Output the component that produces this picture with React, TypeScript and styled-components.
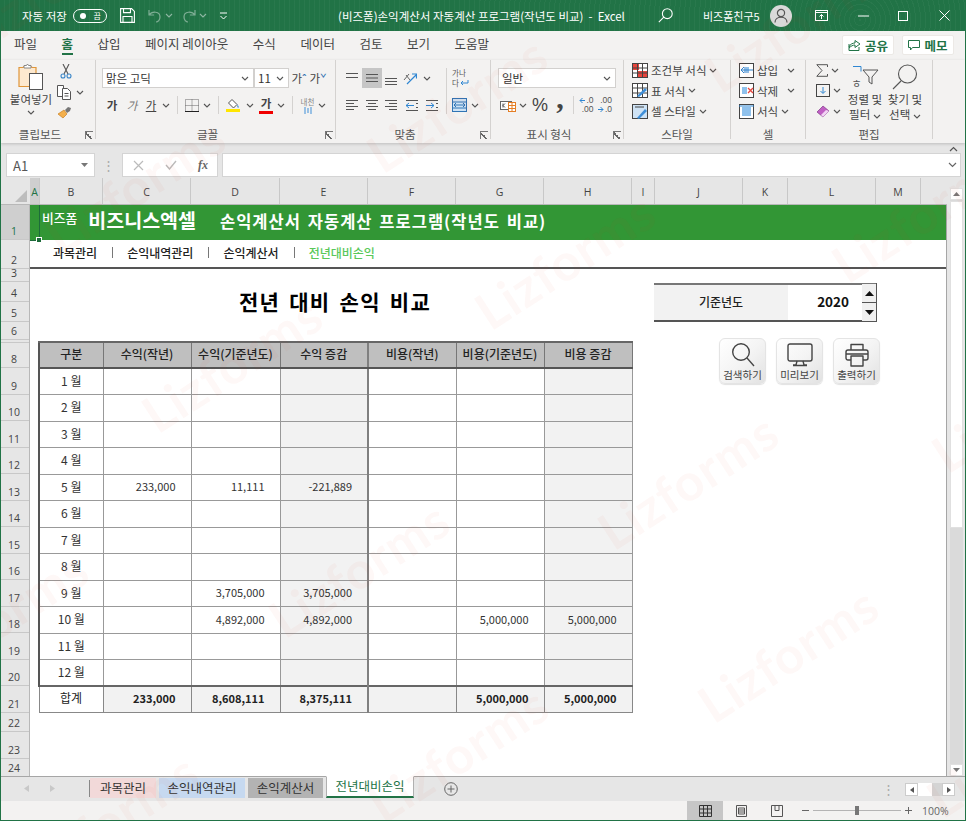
import React from "react";
import styled, { createGlobalStyle } from "styled-components";

const GlobalStyle = createGlobalStyle`
  html, body { margin: 0; padding: 0; background: #fff; }
  * { box-sizing: border-box; }
  body { font-family: "Noto Sans CJK KR", "Noto Sans", sans-serif; }
`;

const KR = `"Noto Sans CJK KR", "Noto Sans", sans-serif`;

const colWidths: [string, number][] = [
  ["A", 10], ["B", 63], ["C", 88], ["D", 89], ["E", 88], ["F", 88], ["G", 88],
  ["H", 88], ["I", 23], ["J", 88], ["K", 45], ["L", 88], ["M", 45],
];

const rowHeights: [string, number][] = [
  ["1", 35], ["2", 29], ["3", 13], ["4", 20], ["5", 20], ["6", 18], ["", 3], ["8", 25],
  ["9", 27], ["10", 26], ["11", 27], ["12", 26], ["13", 27], ["14", 26], ["15", 27], ["16", 26],
  ["17", 27], ["18", 26], ["19", 27], ["20", 26], ["21", 27], ["22", 19], ["23", 27], ["24", 18],
];

const rows: string[][] = [
  ["1 월", "", "", "", "", "", ""],
  ["2 월", "", "", "", "", "", ""],
  ["3 월", "", "", "", "", "", ""],
  ["4 월", "", "", "", "", "", ""],
  ["5 월", "233,000", "11,111", "-221,889", "", "", ""],
  ["6 월", "", "", "", "", "", ""],
  ["7 월", "", "", "", "", "", ""],
  ["8 월", "", "", "", "", "", ""],
  ["9 월", "", "3,705,000", "3,705,000", "", "", ""],
  ["10 월", "", "4,892,000", "4,892,000", "", "5,000,000", "5,000,000"],
  ["11 월", "", "", "", "", "", ""],
  ["12 월", "", "", "", "", "", ""],
];

const totals = ["합계", "233,000", "8,608,111", "8,375,111", "", "5,000,000", "5,000,000"];
const headers = ["구분", "수익(작년)", "수익(기준년도)", "수익 증감", "비용(작년)", "비용(기준년도)", "비용 증감"];
const tableCols = [64, 88, 89, 88, 88, 88, 88];

// where each faint watermark starts (baseline, left end)
const marks = [
  [-20, 60], [63, 262], [385, 180], [723, 100], [160, 440], [493, 337], [850, 290],
  [616, 557], [950, 480], [-74, 694], [287, 645], [716, 730], [386, 830], [36, 897], [945, 825],
];

const Chev = ({ dim }: { dim?: boolean }) => (
  <svg width="8" height="5" viewBox="0 0 8 5">
    <path d="M1 1l3 3 3-3" fill="none" stroke={dim ? "#8fb7a3" : "#555"} strokeWidth="1.1" />
  </svg>
);

const Lines = ({ d }: { d: string }) => (
  <svg width="14" height="14" viewBox="0 0 14 14"><path d={d} fill="none" stroke="#555" /></svg>
);

const IndentIcon = ({ flip }: { flip: boolean }) => (
  <svg width="14" height="13" viewBox="0 0 14 13" fill="none">
    <path d="M1 1.5h12M1 11.5h12" stroke="#555" />
    <path d={flip ? "M1 6.5h8M6 4l3 2.500L6 9" : "M9 6.5H1M4 4L1 6.500 4 9"} stroke="#2f86d2" />
    <path d="M11 4.5h2M11 8.500h2" stroke="#555" />
  </svg>
);

const App = () => (
  <Window>
    <GlobalStyle />
    <TitleBar>
      <QuickAccess>
        <TitleText>자동 저장</TitleText>
        <Toggle><ToggleDot /><ToggleText>끔</ToggleText></Toggle>
        <svg width="15" height="15" viewBox="0 0 15 15" fill="none" stroke="#fff" strokeWidth="1.1">
          <path d="M.6.6h11l2.800 2.800v11H.6z" /><path d="M3.500.6v4h7v-4M3 14.400V8.500h9v5.900" />
        </svg>
        <QatGroup>
          <svg width="14" height="14" viewBox="0 0 14 14" fill="none" stroke="#7fae95" strokeWidth="1.2">
            <path d="M1 1v5h5M1 6c3-4 11-4 11 2 0 3-2 5-4 5" />
          </svg>
          <Chev dim />
        </QatGroup>
        <QatGroup>
          <svg width="14" height="14" viewBox="0 0 14 14" fill="none" stroke="#7fae95" strokeWidth="1.2">
            <path d="M13 1v5H8M13 6C10 2 2 2 2 8c0 3 2 5 4 5" />
          </svg>
          <Chev dim />
        </QatGroup>
        <svg width="7" height="8" viewBox="0 0 7 8"><path d="M0 1h7M.5 4l3 3 3-3" fill="none" stroke="#fff" /></svg>
      </QuickAccess>
      <WindowTitle>(비즈폼)손익계산서 자동계산 프로그램(작년도 비교)&nbsp;&nbsp;-&nbsp;&nbsp;Excel</WindowTitle>
      <TitleActions>
        <svg width="15" height="15" viewBox="0 0 15 15" fill="none" stroke="#fff" strokeWidth="1.1">
          <circle cx="9.3" cy="5.7" r="4.900" /><path d="M5.800 9.200L.8 14.200" />
        </svg>
        <UserName>비즈폼친구5</UserName>
        <Avatar>
          <svg width="14" height="15" viewBox="0 0 14 15" fill="none" stroke="#555" strokeWidth="1.2">
            <circle cx="7" cy="5" r="3.600" /><path d="M1 14.500c0-7 12-7 12 0" />
          </svg>
        </Avatar>
        <WindowButton $w={36}>
          <svg width="13" height="11" viewBox="0 0 13 11" fill="none" stroke="#fff">
            <rect x=".5" y=".5" width="12" height="10" /><path d="M.5 2.500h12M6.500 9V4.500M4.500 6.500l2-2 2 2" />
          </svg>
        </WindowButton>
        <WindowButton $w={41}>
          <svg width="11" height="2" viewBox="0 0 11 2"><path d="M0 1h11" stroke="#fff" /></svg>
        </WindowButton>
        <WindowButton $w={39}>
          <svg width="10" height="10" viewBox="0 0 10 10"><rect x=".5" y=".5" width="9" height="9" fill="none" stroke="#fff" /></svg>
        </WindowButton>
        <WindowButton $w={42}>
          <svg width="11" height="11" viewBox="0 0 11 11"><path d="M.5.500l10 10M10.500.500l-10 10" stroke="#fff" /></svg>
        </WindowButton>
      </TitleActions>
    </TitleBar>

    <MenuBar>
      <MenuTab>파일</MenuTab>
      <MenuTab $active>홈</MenuTab>
      <MenuTab>삽입</MenuTab>
      <MenuTab>페이지 레이아웃</MenuTab>
      <MenuTab>수식</MenuTab>
      <MenuTab>데이터</MenuTab>
      <MenuTab>검토</MenuTab>
      <MenuTab>보기</MenuTab>
      <MenuTab>도움말</MenuTab>
      <MenuActions>
        <PillButton>
          <svg width="13" height="12" viewBox="0 0 13 12" fill="none" stroke="#217346">
            <path d="M1 5v6.500h10V8M1 8c1-3 4-4 6-4V1.500l5 3.500-5 3.500V6C5 6 3 7 1 9" />
          </svg>
          공유
        </PillButton>
        <PillButton>
          <svg width="12" height="11" viewBox="0 0 12 11" fill="none" stroke="#217346">
            <path d="M.5.500h11v7h-7l-2 2.500v-2.500h-2z" />
          </svg>
          메모
        </PillButton>
      </MenuActions>
    </MenuBar>

    <Ribbon>
      <Group $w={95}>
        <ClipBody>
          <PasteColumn>
            <svg width="26" height="27" viewBox="0 0 26 27">
              <path d="M1 4.500h4l1-1h7l1 1h4v19H1z" fill="#fde9cf" stroke="#e0963a" strokeWidth="1.2" />
              <path d="M6 5V2.500h2.500l1-1.500 1 1.500H13V5z" fill="#fff" stroke="#888" />
              <rect x="11.500" y="10.500" width="13" height="16" fill="#fff" stroke="#555" />
            </svg>
            <SmallLabel>붙여넣기</SmallLabel>
            <Chev />
          </PasteColumn>
          <ClipTools>
            <CutIcon>
              <svg width="12" height="15" viewBox="0 0 12 15" fill="none" strokeWidth="1.1">
                <path d="M3 0l5 10M9 0L4 10" stroke="#555" />
                <circle cx="3" cy="12" r="2" stroke="#3a86c8" /><circle cx="9" cy="12" r="2" stroke="#3a86c8" />
              </svg>
            </CutIcon>
            <ToolRow>
              <svg width="15" height="15" viewBox="0 0 15 15" fill="#fff" stroke="#555">
                <path d="M.5.500h6v11h-6z" /><path d="M5.500 3.500h5l3 3v8h-8z" /><path d="M7.500 8.500h4M7.500 11h4" />
              </svg>
              <Slot $w={15}><Chev /></Slot>
            </ToolRow>
            <svg width="16" height="14" viewBox="0 0 16 14">
              <path d="M8 5l3-3 3 1-1 3-3 2z" fill="#777" />
              <path d="M1 9l6-4 3 4-4 4z" fill="#f4b04c" stroke="#c97f22" strokeWidth=".7" />
            </svg>
          </ClipTools>
        </ClipBody>
        <GroupLabel $launch>클립보드<Launcher /></GroupLabel>
      </Group>

      <Group $w={240}>
        <GroupBody $pad={6}>
          <ToolRow>
            <SelectBox $w={152}><span>맑은 고딕</span><Chev /></SelectBox>
            <SelectBox $w={35}><span>11</span><Chev /></SelectBox>
            <Slot $w={20}><GlyphText>가<Tiny>ˆ</Tiny></GlyphText></Slot>
            <Slot $w={18}><GlyphText>가<Tiny>ˇ</Tiny></GlyphText></Slot>
          </ToolRow>
          <ToolRow>
            <Slot $w={20}><GlyphText $bold>가</GlyphText></Slot>
            <Slot $w={20}><GlyphText $italic>가</GlyphText></Slot>
            <Slot $w={18}><GlyphText $under>가</GlyphText></Slot>
            <Slot $w={12}><Chev /></Slot>
            <RowSep />
            <Slot $w={17}>
              <svg width="14" height="13" viewBox="0 0 14 13" fill="none" stroke="#666" strokeDasharray="1 1">
                <path d="M.5.500h13v12h-13zM7 .500v12M.5 6.500h13" /><path d="M0 12.500h14" stroke="#222" strokeDasharray="none" />
              </svg>
            </Slot>
            <Slot $w={13}><Chev /></Slot>
            <RowSep />
            <Slot $w={18}>
              <ColorGlyph>
                <svg width="13" height="10" viewBox="0 0 13 10">
                  <path d="M5 .500l5 5-3.500 3.500-5-5z" fill="#fff" stroke="#555" /><path d="M10.500 5.500c1 1.500 1.500 2.500 1 3.200-.8.500-1.500-.5-1-3.200z" fill="#2f86d2" />
                </svg>
                <ColorBar $c="#ffe600" />
              </ColorGlyph>
            </Slot>
            <Slot $w={15}><Chev /></Slot>
            <Slot $w={18}>
              <ColorGlyph><GlyphText $bold>가</GlyphText><ColorBar $c="#f00000" /></ColorGlyph>
            </Slot>
            <Slot $w={12}><Chev /></Slot>
            <RowSep />
            <Slot $w={19}>
              <PhoneticIcon>
                내천
                <svg width="8" height="7" viewBox="0 0 8 7"><path d="M1 0v7M4 1v5M7 0v7" stroke="#3f8fd8" /></svg>
              </PhoneticIcon>
            </Slot>
            <Slot $w={10}><Chev /></Slot>
          </ToolRow>
        </GroupBody>
        <GroupLabel $launch>글꼴<Launcher /></GroupLabel>
      </Group>

      <Group $w={155}>
        <AlignBody>
          <AlignColumn>
            <ToolRow>
              <Slot $w={20}><Lines d="M1 2.500h12M1 6.500h12" /></Slot>
              <Slot $w={20} $selected><Lines d="M1 3.500h12M1 7h12M1 10.500h12" /></Slot>
              <Slot $w={18}><Lines d="M1 7.500h12M1 10.500h12M1 13.500h12" /></Slot>
              <Slot $w={20}>
                <svg width="14" height="14" viewBox="0 0 14 14" fill="none">
                  <path d="M1 9l5-6M3 4l4 5" stroke="#666" /><path d="M4 13L13 4M9 3h4.500v4.500" stroke="#2f86d2" strokeWidth="1.2" />
                </svg>
              </Slot>
              <Slot $w={14}><Chev /></Slot>
            </ToolRow>
            <ToolRow>
              <Slot $w={20}><Lines d="M1 2.500h12M1 5.500h8M1 8.500h12M1 11.500h8" /></Slot>
              <Slot $w={20}><Lines d="M1 2.500h12M3 5.500h8M1 8.500h12M3 11.500h8" /></Slot>
              <Slot $w={18}><Lines d="M1 2.500h12M5 5.500h8M1 8.500h12M5 11.500h8" /></Slot>
              <Slot $w={23}><IndentIcon flip={false} /></Slot>
              <Slot $w={18}><IndentIcon flip /></Slot>
            </ToolRow>
          </AlignColumn>
          <RowSep $tall />
          <WrapColumn>
            <WrapIcon>
              <span>가나</span>
              <WrapLine>
                <span>다</span>
                <svg width="9" height="7" viewBox="0 0 9 7" fill="none" stroke="#2f86d2"><path d="M8 0v3H1M3 1L1 3l2 2" /></svg>
              </WrapLine>
            </WrapIcon>
            <ToolRow>
              <svg width="15" height="14" viewBox="0 0 15 14" fill="#cfe3f5" stroke="#2f74b5">
                <rect x=".5" y=".5" width="14" height="13" /><path d="M.5 4h14M.5 10h14" /><path d="M2 7h11M4 5l-2 2 2 2M11 5l2 2-2 2" fill="none" />
              </svg>
              <Slot $w={16}><Chev /></Slot>
            </ToolRow>
          </WrapColumn>
        </AlignBody>
        <GroupLabel $launch>맞춤<Launcher /></GroupLabel>
      </Group>

      <Group $w={133}>
        <GroupBody $pad={7}>
          <ToolRow><SelectBox $w={118}><span>일반</span><Chev /></SelectBox></ToolRow>
          <ToolRow>
            <Slot $w={20}>
              <svg width="16" height="13" viewBox="0 0 16 13" fill="none">
                <rect x=".5" y="2.500" width="11" height="8" stroke="#666" fill="#fff" />
                <path d="M3 4.500v4M5 4.500l-2 2 2 2" stroke="#555" />
                <rect x="8.500" y="3.500" width="7" height="9" fill="#fff" stroke="#e57e25" /><path d="M8.500 6.500h7M8.500 9.500h7M12 3.500v9" stroke="#e57e25" />
              </svg>
            </Slot>
            <Slot $w={10}><Chev /></Slot>
            <Slot $w={24}><PercentText>%</PercentText></Slot>
            <Slot $w={16}><CommaText>,</CommaText></Slot>
            <RowSep />
            <Slot $w={15}>
              <DecimalIcon>
                <DecimalLine>
                  <svg width="6" height="7" viewBox="0 0 6 7" fill="none" stroke="#2f86d2"><path d="M6 3.500H1M3.500 1L1 3.500 3.500 6" /></svg>
                  <span>.0</span>
                </DecimalLine>
                <DecimalLine>.00</DecimalLine>
              </DecimalIcon>
            </Slot>
            <Slot $w={22}>
              <DecimalIcon>
                <DecimalLine>.00</DecimalLine>
                <DecimalLine>
                  <svg width="6" height="7" viewBox="0 0 6 7" fill="none" stroke="#2f86d2"><path d="M0 3.500h5M2.500 1L5 3.500 2.500 6" /></svg>
                  <span>.0</span>
                </DecimalLine>
              </DecimalIcon>
            </Slot>
          </ToolRow>
        </GroupBody>
        <GroupLabel $launch>표시 형식<Launcher /></GroupLabel>
      </Group>

      <Group $w={107}>
        <ListBody>
          <ListRow>
            <svg width="16" height="15" viewBox="0 0 16 15" stroke="#444"><rect x=".5" y=".5" width="15" height="14" fill="#fff" /><rect x="1" y="1" width="6" height="6" fill="#e8453c" stroke="none" /><rect x="6" y="8" width="9" height="6" fill="#e8453c" stroke="none" /><path d="M.5 5h15M.5 10h15M5.500.5v14M10.500.5v14" fill="none" /></svg>
            조건부 서식 <Chev />
          </ListRow>
          <ListRow>
            <svg width="16" height="15" viewBox="0 0 16 15"><rect x=".5" y=".5" width="15" height="14" fill="#fff" stroke="#444" /><path d="M.5 5h15M.5 10h15M5.500.5v14M10.500.5v14" stroke="#444" /><path d="M5 13l8-8 2 2-8 7z" fill="#3f8fd8" /></svg>
            표 서식 <Chev />
          </ListRow>
          <ListRow>
            <svg width="16" height="15" viewBox="0 0 16 15"><rect x=".5" y=".5" width="15" height="14" fill="#cfe3f5" stroke="#444" /><path d="M5 14l8-9 2 2-8 8z" fill="#3f8fd8" /><path d="M3 3h9" stroke="#444" /></svg>
            셀 스타일 <Chev />
          </ListRow>
        </ListBody>
        <GroupLabel>스타일</GroupLabel>
      </Group>

      <Group $w={75}>
        <ListBody>
          <ListRow>
            <svg width="15" height="15" viewBox="0 0 15 15"><rect x=".5" y=".5" width="14" height="14" fill="#fff" stroke="#444" /><rect x="5" y="4" width="5" height="6" fill="#8fc1ec" /><path d="M14 7H2M5 4L2 7l3 3" fill="none" stroke="#2f86d2" /></svg>
            삽입 <CellChev><Chev /></CellChev>
          </ListRow>
          <ListRow>
            <svg width="15" height="15" viewBox="0 0 15 15"><rect x=".5" y=".5" width="14" height="14" fill="#fff" stroke="#444" /><rect x="3" y="4" width="5" height="7" fill="#8fc1ec" /><path d="M9 5l5 5M14 5l-5 5" stroke="#e8453c" strokeWidth="1.3" /></svg>
            삭제 <CellChev><Chev /></CellChev>
          </ListRow>
          <ListRow>
            <svg width="15" height="15" viewBox="0 0 15 15"><rect x=".5" y=".5" width="14" height="14" fill="#fff" stroke="#444" /><rect x="3" y="3" width="9" height="9" fill="#8fc1ec" /><path d="M0 2h15" stroke="#2f86d2" /></svg>
            서식 <Chev />
          </ListRow>
        </ListBody>
        <GroupLabel>셀</GroupLabel>
      </Group>

      <Group $w={127}>
        <EditBody>
          <EditColumn>
            <ToolRow>
              <svg width="12" height="13" viewBox="0 0 12 13" fill="none" stroke="#555"><path d="M11.500 3V.7H.8L6 6.500.8 12.300h10.700V10" /></svg>
              <Chev />
            </ToolRow>
            <ToolRow>
              <svg width="14" height="13" viewBox="0 0 14 13" fill="none"><rect x=".5" y=".5" width="13" height="12" stroke="#444" /><path d="M7 3v6M4.500 7L7 9.500 9.500 7" stroke="#2f86d2" /></svg>
              <Chev />
            </ToolRow>
            <ToolRow>
              <svg width="14" height="13" viewBox="0 0 14 13"><path d="M1 7l6-6 6 5-6 6z" fill="#c05fc4" stroke="#7f3a86" strokeWidth=".7" /><path d="M5 10l5-5 3 1-6 6z" fill="#f2d4f4" /></svg>
              <Chev />
            </ToolRow>
          </EditColumn>
          <BigTool $w={40} $top={6}>
            <SortIcon>
              <SortHieut>ㅎ</SortHieut>
              <svg width="27" height="20" viewBox="0 0 27 20" fill="none">
                <path d="M1 .5h8v5" stroke="#2f86d2" />
                <path d="M11 4h15l-6 7v7l-3-2v-5z" stroke="#555" />
              </svg>
            </SortIcon>
            <BigLabel>정렬 및<br />필터 <Chev /></BigLabel>
          </BigTool>
          <BigTool $w={40} $top={4}>
            <svg width="26" height="26" viewBox="0 0 26 26" fill="none" stroke="#555" strokeWidth="1.1">
              <circle cx="15.500" cy="10" r="9" /><path d="M9 17L1 25" />
            </svg>
            <BigLabel>찾기 및<br />선택 <Chev /></BigLabel>
          </BigTool>
        </EditBody>
        <GroupLabel>편집</GroupLabel>
      </Group>
      <Collapse>
        <svg width="9" height="6" viewBox="0 0 9 6"><path d="M1 5l3.500-3.500L8 5" fill="none" stroke="#555" strokeWidth="1.2" /></svg>
      </Collapse>
    </Ribbon>

    <FormulaBar>
      <NameBox><span>A1</span><svg width="7" height="4" viewBox="0 0 7 4"><path d="M0 0h7L3.500 4z" fill="#777" /></svg></NameBox>
      <Grip>⋮</Grip>
      <FormulaButtons>
        <svg width="11" height="11" viewBox="0 0 11 11"><path d="M1 1l9 9M10 1l-9 9" stroke="#bbb" strokeWidth="1.2" /></svg>
        <svg width="12" height="10" viewBox="0 0 12 10"><path d="M1 5l3.500 4L11 1" fill="none" stroke="#bbb" strokeWidth="1.4" /></svg>
        <FxText>fx</FxText>
      </FormulaButtons>
      <FormulaInput>
        <svg width="9" height="6" viewBox="0 0 9 6"><path d="M1 1l3.500 3.500L8 1" fill="none" stroke="#666" strokeWidth="1.2" /></svg>
      </FormulaInput>
    </FormulaBar>

    <SheetFrame>
      <SheetColumn>
        <ColumnHeader>
          <Corner><CornerMark /></Corner>
          {colWidths.map(([name, w]) => (
            <ColumnCell key={name} $w={w} $selected={name === "A"}>{name}</ColumnCell>
          ))}
          <ColumnRest />
        </ColumnHeader>

        <SheetArea>
          <RowHeader>
            {rowHeights.map(([name, h], i) => (
              <RowCell key={i} $h={h} $selected={name === "1"}>{name}</RowCell>
            ))}
          </RowHeader>
          <Canvas>
            <Banner>
              <SelectedCell />
              <BrandSmall>비즈폼</BrandSmall>
              <BrandLarge>비즈니스엑셀</BrandLarge>
              <BannerTitle>손익계산서 자동계산 프로그램(작년도 비교)</BannerTitle>
            </Banner>
            <SheetNav>
              <NavLink>과목관리</NavLink><NavBar />
              <NavLink>손익내역관리</NavLink><NavBar />
              <NavLink>손익계산서</NavLink><NavBar />
              <NavLink $active>전년대비손익</NavLink>
            </SheetNav>
            <SheetBody>
              <ReportColumn>
                <ReportTitle>전년 대비 손익 비교</ReportTitle>
                <ReportTable>
                  <colgroup>
                    {tableCols.map((w, i) => <col key={i} style={{ width: w }} />)}
                  </colgroup>
                  <thead>
                    <tr>
                      {headers.map((h, i) => <HeadCell key={h} $strong={i === 4}>{h}</HeadCell>)}
                    </tr>
                  </thead>
                  <tbody>
                    {rows.map((r, ri) => (
                      <BodyRow key={ri} $odd={ri % 2 === 0}>
                        {r.map((v, i) => (
                          <DataCell key={i} $first={i === 0} $shade={i === 3 || i === 6} $strong={i === 4}>{v}</DataCell>
                        ))}
                      </BodyRow>
                    ))}
                    <TotalRow>
                      {totals.map((v, i) => (
                        <TotalCell key={i} $first={i === 0} $strong={i === 4}>{v}</TotalCell>
                      ))}
                    </TotalRow>
                  </tbody>
                </ReportTable>
              </ReportColumn>
              <SideColumn>
                <YearBox>
                  <YearLabel>기준년도</YearLabel>
                  <YearValue>2020</YearValue>
                  <Spinner>
                    <SpinButton><svg width="9" height="5" viewBox="0 0 9 5"><path d="M0 5h9L4.500 0z" fill="#111" /></svg></SpinButton>
                    <SpinButton><svg width="9" height="5" viewBox="0 0 9 5"><path d="M0 0h9L4.500 5z" fill="#111" /></svg></SpinButton>
                  </Spinner>
                </YearBox>
                <ActionRow>
                  <ActionButton>
                    <svg width="24" height="25" viewBox="0 0 24 25" fill="none" stroke="#444" strokeWidth="1.4">
                      <circle cx="10" cy="10" r="8.300" /><path d="M16 16l7 8" />
                    </svg>
                    검색하기
                  </ActionButton>
                  <ActionButton>
                    <svg width="26" height="24" viewBox="0 0 26 24" fill="none" stroke="#444" strokeWidth="1.4" strokeLinejoin="round">
                      <path d="M3 1h20a2 2 0 0 1 2 2v13a2 2 0 0 1-2 2H3a2 2 0 0 1-2-2V3a2 2 0 0 1 2-2z" />
                      <path d="M10 18l-1 4h-3M16 18l1 4h3M6 22.500h14" />
                    </svg>
                    미리보기
                  </ActionButton>
                  <ActionButton>
                    <svg width="24" height="24" viewBox="0 0 24 24" fill="none" stroke="#444" strokeWidth="1.4" strokeLinejoin="round">
                      <path d="M6 7V1.500h12V7M6 17H3a2 2 0 0 1-2-2V9a2 2 0 0 1 2-2h18a2 2 0 0 1 2 2v6a2 2 0 0 1-2 2h-3" />
                      <path d="M6 13h12v10H6zM1 11h22" />
                    </svg>
                    출력하기
                  </ActionButton>
                </ActionRow>
              </SideColumn>
            </SheetBody>
          </Canvas>
        </SheetArea>
      </SheetColumn>
      <VScroll>
        <ScrollButton><svg width="7" height="4" viewBox="0 0 7 4"><path d="M0 4h7L3.500 0z" fill="#777" /></svg></ScrollButton>
        <ScrollTrack><ScrollThumb /></ScrollTrack>
        <ScrollButton><svg width="7" height="4" viewBox="0 0 7 4"><path d="M0 0h7L3.500 4z" fill="#777" /></svg></ScrollButton>
      </VScroll>
    </SheetFrame>

    <TabBar>
      <TabNav>
        <svg width="5" height="7" viewBox="0 0 5 7"><path d="M5 0v7L0 3.500z" fill="#c8c8c8" /></svg>
        <svg width="5" height="7" viewBox="0 0 5 7"><path d="M0 0v7l5-3.500z" fill="#c8c8c8" /></svg>
      </TabNav>
      <SheetTab $bg="#f2d9d9" $w={66}>과목관리</SheetTab>
      <SheetTab $bg="#c6d9f0" $w={86}>손익내역관리</SheetTab>
      <SheetTab $bg="#b3b3b3" $w={75}>손익계산서</SheetTab>
      <ActiveSheetTab>전년대비손익</ActiveSheetTab>
      <AddSheet>
        <svg width="14" height="14" viewBox="0 0 14 14" fill="none" stroke="#666"><circle cx="7" cy="7" r="6.300" /><path d="M7 3.500v7M3.500 7h7" /></svg>
      </AddSheet>
      <TabGrip>⋮</TabGrip>
      <HScroll>
        <HButton><svg width="4" height="6" viewBox="0 0 4 6"><path d="M4 0v6L0 3z" fill="#555" /></svg></HButton>
        <HThumb />
        <HTrack />
        <HButton><svg width="4" height="6" viewBox="0 0 4 6"><path d="M0 0v6l4-3z" fill="#555" /></svg></HButton>
      </HScroll>
    </TabBar>

    <StatusBar>
      <ViewButton $selected>
        <svg width="13" height="12" viewBox="0 0 13 12" fill="none" stroke="#333"><path d="M.5.500h12v11H.5zM4.500.5v11M8.500.5v11M.5 4h12M.5 8h12" /></svg>
      </ViewButton>
      <ViewButton>
        <svg width="11" height="12" viewBox="0 0 11 12" fill="none" stroke="#555"><path d="M.5.500h10v11H.5z" /><path d="M2.500 3h6v6h-6zM3 5h5M3 7h5" /></svg>
      </ViewButton>
      <ViewButton>
        <svg width="12" height="12" viewBox="0 0 12 12" fill="none" stroke="#555"><path d="M.5 11.500V.5h11v11M4 .5v5h4v-5M.5 11.500h11" /></svg>
      </ViewButton>
      <ZoomSlider>
        <svg width="7" height="1" viewBox="0 0 7 1"><path d="M0 .5h7" stroke="#666" /></svg>
        <ZoomTrack><ZoomThumb /></ZoomTrack>
        <svg width="7" height="7" viewBox="0 0 7 7"><path d="M0 3.500h7M3.500 0v7" stroke="#666" /></svg>
      </ZoomSlider>
      <ZoomValue>100%</ZoomValue>
    </StatusBar>

    <Watermarks aria-hidden>
      {marks.map(([x, y], i) => (
        <Mark key={i} style={{ left: x, top: y }}>Lizforms</Mark>
      ))}
    </Watermarks>
  </Window>
);

export default App;

const Window = styled.div`
  position: relative;
  width: 966px;
  height: 821px;
  display: flex;
  flex-direction: column;
  overflow: hidden;
  background: #f3f2f1;
  border: 1px solid #217346;
  border-top: 0;
  font-family: ${KR};
  color: #444;
`;

const TitleBar = styled.header`
  height: 31px;
  flex: none;
  margin: 0 -1px;
  display: flex;
  align-items: center;
  background-color: #217346;
  background-image: repeating-radial-gradient(circle at 860px 20px, rgba(255, 255, 255, 0.035) 0 1px, transparent 1px 5px);
  color: #fff;
`;

const QuickAccess = styled.div`
  width: 338px;
  flex: none;
  padding-left: 22px;
  display: flex;
  align-items: center;
  gap: 13px;
`;

const TitleText = styled.span`
  font-size: 11.5px;
  margin-right: -7px;
  white-space: nowrap;
`;

const Toggle = styled.div`
  width: 34px;
  height: 14px;
  border: 1.3px solid #fff;
  border-radius: 8px;
  display: flex;
  align-items: center;
  padding: 0 5px 0 6px;
  justify-content: space-between;
`;

const ToggleDot = styled.span`
  width: 6px;
  height: 6px;
  border-radius: 50%;
  background: #fff;
`;

const ToggleText = styled.span`
  font-size: 8px;
  line-height: 10px;
`;

const QatGroup = styled.div`
  display: flex;
  align-items: center;
  gap: 3px;
  & + & { margin-left: -4px; }
`;

const WindowTitle = styled.div`
  width: 296px;
  flex: none;
  font-size: 11.5px;
  white-space: nowrap;
`;

const TitleActions = styled.div`
  flex: 1;
  display: flex;
  align-items: center;
  padding-left: 24px;
`;

const UserName = styled.span`
  margin-left: 30px;
  font-size: 11px;
  white-space: nowrap;
`;

const Avatar = styled.div`
  width: 22px;
  height: 22px;
  margin-left: 10px;
  border-radius: 50%;
  background: #d9d9d9;
  display: flex;
  align-items: center;
  justify-content: center;
`;

const WindowButton = styled.div<{ $w: number }>`
  width: ${(p) => p.$w}px;
  flex: none;
  display: flex;
  justify-content: flex-end;
  align-items: center;
`;

const MenuBar = styled.nav`
  height: 29px;
  flex: none;
  display: flex;
  align-items: flex-start;
  padding: 4px 0 0 13px;
  gap: 24.5px;
`;

const MenuTab = styled.div<{ $active?: boolean }>`
  height: 20px;
  font-size: 12.5px;
  line-height: 18px;
  white-space: nowrap;
  color: ${(p) => (p.$active ? "#217346" : "#444")};
  font-weight: ${(p) => (p.$active ? 700 : 400)};
  border-bottom: ${(p) => (p.$active ? "2px solid #217346" : "0")};
`;

const MenuActions = styled.div`
  margin-left: auto;
  margin-right: 11px;
  display: flex;
  gap: 8px;
`;

const PillButton = styled.div`
  width: 52px;
  height: 20px;
  background: #fff;
  border: 1px solid #ece9e6;
  border-radius: 2px;
  display: flex;
  align-items: center;
  justify-content: center;
  gap: 4px;
  font-size: 12.5px;
  font-weight: 700;
  color: #217346;
`;

const Ribbon = styled.section`
  height: 83px;
  flex: none;
  display: flex;
  background: #f3f2f1;
  box-shadow: 0 1px 3px rgba(0, 0, 0, 0.18);
  z-index: 2;
`;

const Group = styled.div<{ $w: number }>`
  width: ${(p) => p.$w}px;
  flex: none;
  height: 79px;
  display: flex;
  flex-direction: column;
  border-right: 1px solid #d4d2d0;
`;

const GroupBody = styled.div<{ $pad: number }>`
  flex: 1;
  padding: 8px 0 0 ${(p) => p.$pad}px;
  display: flex;
  flex-direction: column;
  gap: 7px;
`;

const GroupLabel = styled.div<{ $launch?: boolean }>`
  position: relative;
  height: 16px;
  margin-bottom: -4px;
  padding-right: ${(p) => (p.$launch ? 16 : 0)}px;
  font-size: 11.5px;
  line-height: 15px;
  text-align: center;
  color: #555;
`;

const Launcher = styled.i`
  position: absolute;
  right: 2px;
  bottom: 4px;
  width: 8px;
  height: 8px;
  border-left: 1px solid #777;
  border-top: 1px solid #777;
  background: linear-gradient(45deg, transparent 35%, #666 35% 50%, transparent 50%);
`;

const ClipBody = styled.div`
  flex: 1;
  display: flex;
  padding-left: 8px;
`;

const PasteColumn = styled.div`
  width: 44px;
  padding-top: 3px;
  display: flex;
  flex-direction: column;
  align-items: center;
`;

const SmallLabel = styled.span`
  font-size: 11.5px;
  line-height: 15px;
  margin: 2px 0 3px;
  white-space: nowrap;
`;

const ClipTools = styled.div`
  margin-left: 4px;
  padding-top: 4px;
  display: flex;
  flex-direction: column;
  gap: 3px;
  align-items: flex-start;
`;

const CutIcon = styled.div`
  margin-left: 3px;
  height: 15px;
  display: flex;
`;

const ToolRow = styled.div`
  display: flex;
  align-items: center;
  height: 20px;
  & > svg + svg { margin-left: 3px; }
`;

const Slot = styled.div<{ $w: number; $selected?: boolean }>`
  width: ${(p) => p.$w}px;
  height: 20px;
  flex: none;
  display: flex;
  align-items: center;
  justify-content: center;
  background: ${(p) => (p.$selected ? "#c6c6c6" : "transparent")};
`;

const RowSep = styled.span<{ $tall?: boolean }>`
  width: 1px;
  height: ${(p) => (p.$tall ? 46 : 18)}px;
  flex: none;
  margin: 0 5px;
  background: #d4d2d0;
`;

const SelectBox = styled.div<{ $w: number }>`
  width: ${(p) => p.$w}px;
  height: 20px;
  flex: none;
  background: #fff;
  border: 1px solid #d2d0ce;
  display: flex;
  align-items: center;
  justify-content: space-between;
  padding: 0 4px 0 3px;
  font-size: 11.5px;
  color: #333;
`;

const GlyphText = styled.span<{ $bold?: boolean; $italic?: boolean; $under?: boolean }>`
  font-size: 11.5px;
  line-height: 15px;
  white-space: nowrap;
  color: ${(p) => (p.$italic ? "#777" : "#444")};
  font-weight: ${(p) => (p.$bold ? 700 : 400)};
  font-style: ${(p) => (p.$italic ? "italic" : "normal")};
  text-decoration: ${(p) => (p.$under ? "underline" : "none")};
`;

const Tiny = styled.span`
  font-size: 11px;
  color: #2f6fb0;
`;

const ColorGlyph = styled.div`
  display: flex;
  flex-direction: column;
  align-items: center;
`;

const ColorBar = styled.span<{ $c: string }>`
  width: 14px;
  height: 3px;
  background: ${(p) => p.$c};
`;

const PhoneticIcon = styled.div`
  display: flex;
  flex-direction: column;
  align-items: center;
  font-size: 7.5px;
  line-height: 10px;
  color: #888;
  white-space: nowrap;
`;

const AlignBody = styled.div`
  flex: 1;
  display: flex;
  padding: 8px 0 0 6px;
`;

const AlignColumn = styled.div`
  width: 99px;
  flex: none;
  display: flex;
  flex-direction: column;
  gap: 7px;
`;

const WrapColumn = styled.div`
  display: flex;
  flex-direction: column;
  gap: 7px;
`;

const WrapIcon = styled.div`
  height: 20px;
  display: flex;
  flex-direction: column;
  font-size: 7.5px;
  line-height: 10px;
  color: #555;
`;

const WrapLine = styled.div`
  display: flex;
  align-items: center;
  gap: 1px;
`;

const PercentText = styled.span`
  font-family: "Liberation Sans", sans-serif;
  font-size: 18px;
  line-height: 20px;
  color: #444;
`;

const CommaText = styled.span`
  font-family: "Liberation Serif", serif;
  font-size: 30px;
  line-height: 20px;
  font-weight: 700;
  margin-top: -14px;
  color: #444;
`;

const DecimalIcon = styled.div`
  display: flex;
  flex-direction: column;
  align-items: flex-end;
  font-family: "Liberation Sans", sans-serif;
  font-size: 8.5px;
  line-height: 9px;
  color: #555;
  white-space: nowrap;
`;

const DecimalLine = styled.div`
  display: flex;
  align-items: center;
  gap: 1px;
`;

const ListBody = styled.div`
  flex: 1;
  padding: 0 0 0 8px;
  display: flex;
  flex-direction: column;
`;

const ListRow = styled.div`
  height: 20.5px;
  display: flex;
  align-items: center;
  gap: 3px;
  font-size: 11.5px;
  white-space: nowrap;
`;

const CellChev = styled.span`
  margin-left: 6px;
  display: flex;
`;

const EditBody = styled.div`
  flex: 1;
  display: flex;
  padding-left: 10px;
`;

const EditColumn = styled.div`
  width: 29px;
  flex: none;
  display: flex;
  flex-direction: column;
  & > div { height: 20.5px; }
`;

const BigTool = styled.div<{ $w: number; $top: number }>`
  width: ${(p) => p.$w}px;
  flex: none;
  display: flex;
  flex-direction: column;
  align-items: center;
  padding-top: ${(p) => p.$top}px;
`;

const SortIcon = styled.div`
  position: relative;
  width: 27px;
  height: 24px;
  flex: none;
`;

const SortHieut = styled.span`
  position: absolute;
  left: 0;
  bottom: 0;
  font-size: 11px;
  line-height: 14px;
  color: #555;
`;

const BigLabel = styled.div`
  margin-top: 2px;
  font-size: 11.5px;
  line-height: 15px;
  text-align: center;
  white-space: nowrap;
`;

const Collapse = styled.div`
  margin-left: 16px;
  padding-top: 73px;
`;

const FormulaBar = styled.div`
  height: 35px;
  flex: none;
  background: #e6e6e6;
  display: flex;
  align-items: flex-end;
  padding: 0 4px 1px 5px;
`;

const NameBox = styled.div`
  width: 89px;
  height: 24px;
  flex: none;
  background: #fff;
  border: 1px solid #d4d4d4;
  display: flex;
  align-items: center;
  justify-content: space-between;
  padding: 0 6px;
  font-size: 13px;
  color: #555;
`;

const Grip = styled.span`
  width: 27px;
  height: 24px;
  flex: none;
  text-align: center;
  font-size: 13px;
  line-height: 24px;
  color: #aaa;
`;

const FormulaButtons = styled.div`
  width: 96px;
  height: 24px;
  flex: none;
  background: #fff;
  border: 1px solid #d4d4d4;
  display: flex;
  align-items: center;
  justify-content: space-between;
  padding: 0 9px 0 10px;
`;

const FxText = styled.span`
  font-family: "Liberation Serif", serif;
  font-style: italic;
  font-weight: 700;
  font-size: 12px;
  color: #666;
`;

const FormulaInput = styled.div`
  flex: 1;
  margin-left: 4px;
  height: 24px;
  background: #fff;
  border: 1px solid #d4d4d4;
  display: flex;
  align-items: center;
  justify-content: flex-end;
  padding-right: 3px;
`;

const SheetFrame = styled.div`
  height: 598px;
  flex: none;
  display: flex;
`;

const SheetColumn = styled.div`
  width: 946px;
  flex: none;
  display: flex;
  flex-direction: column;
`;

const ColumnHeader = styled.div`
  height: 27px;
  flex: none;
  display: flex;
  background: #e6e6e6;
  border-bottom: 1px solid #b8b8b8;
`;

const Corner = styled.div`
  width: 29px;
  flex: none;
  display: flex;
  align-items: flex-end;
  justify-content: flex-end;
  padding: 0 3px 2px 0;
`;

const CornerMark = styled.span`
  width: 0;
  height: 0;
  border-left: 12px solid transparent;
  border-bottom: 12px solid #bdbdbd;
`;

const ColumnCell = styled.div<{ $w: number; $selected?: boolean }>`
  width: ${(p) => p.$w}px;
  flex: none;
  display: flex;
  align-items: center;
  justify-content: center;
  border-right: 1px solid #c8c8c8;
  font-family: "Open Sans", "Noto Sans", sans-serif;
  font-size: 10.5px;
  padding-top: 1px;
  color: ${(p) => (p.$selected ? "#217346" : "#444")};
  background: ${(p) => (p.$selected ? "#cfcfcf" : "transparent")};
`;

const ColumnRest = styled.div`
  flex: 1;
`;

const SheetArea = styled.div`
  height: 571px;
  flex: none;
  display: flex;
  overflow: hidden;
`;

const RowHeader = styled.div`
  width: 29px;
  flex: none;
  background: #e6e6e6;
  display: flex;
  flex-direction: column;
  border-right: 1px solid #b8b8b8;
`;

const RowCell = styled.div<{ $h: number; $selected?: boolean }>`
  height: ${(p) => p.$h}px;
  flex: none;
  display: flex;
  align-items: flex-end;
  justify-content: center;
  border-bottom: 1px solid #c8c8c8;
  font-family: "Open Sans", "Noto Sans", sans-serif;
  font-size: 10.5px;
  line-height: 12px;
  padding: 0 2px 2px 0;
  color: ${(p) => (p.$selected ? "#217346" : "#444")};
  background: ${(p) => (p.$selected ? "#cfcfcf" : "transparent")};
`;

const Canvas = styled.main`
  width: 917px;
  flex: none;
  background: #fff;
  border-right: 1px solid #a6a6a6;
  overflow: hidden;
`;

const Banner = styled.div`
  position: relative;
  height: 35px;
  background: #329635;
  display: flex;
  align-items: center;
  padding: 0 0 4px 12px;
  color: #fff;
  white-space: nowrap;
`;

const SelectedCell = styled.span`
  position: absolute;
  left: -1px;
  top: -1px;
  width: 11px;
  height: 37px;
  border: 1px solid #1d6b3a;
  &::after {
    content: "";
    position: absolute;
    right: -3px;
    bottom: -3px;
    width: 4px;
    height: 4px;
    background: #1d6b3a;
    border: 1px solid #fff;
  }
`;

const BrandSmall = styled.span`
  font-size: 12.8px;
  font-weight: 500;
  margin-top: -7px;
`;

const BrandLarge = styled.span`
  margin-left: 11px;
  font-size: 19.5px;
  font-weight: 700;
  margin-top: -3px;
`;

const BannerTitle = styled.span`
  margin-left: 24px;
  font-size: 16.5px;
  font-weight: 700;
  letter-spacing: 1.02px;
  word-spacing: 2px;
`;

const SheetNav = styled.div`
  height: 29px;
  display: flex;
  align-items: center;
  padding: 0 0 2px 23px;
  border-bottom: 2px solid #555;
`;

const NavLink = styled.span<{ $active?: boolean }>`
  font-size: 12px;
  font-weight: 500;
  white-space: nowrap;
  color: ${(p) => (p.$active ? "#5ac85a" : "#222")};
`;

const NavBar = styled.span`
  width: 1px;
  height: 11px;
  margin: 0 14px 0 15px;
  background: #777;
`;

const SheetBody = styled.div`
  display: flex;
  padding-left: 8px;
`;

const ReportColumn = styled.div`
  width: 594px;
  flex: none;
`;

const ReportTitle = styled.h1`
  height: 72px;
  margin: 0;
  padding-bottom: 9px;
  display: flex;
  align-items: center;
  justify-content: center;
  font-size: 21px;
  font-weight: 700;
  color: #000;
  letter-spacing: 1.3px;
  word-spacing: 3px;
`;

const ReportTable = styled.table`
  width: 594px;
  table-layout: fixed;
  border-collapse: collapse;
  font-size: 11px;
  color: #333;
`;

const HeadCell = styled.th<{ $strong?: boolean }>`
  height: 26px;
  padding: 0 0 3px;
  background: #bfbfbf;
  font-weight: 500;
  font-size: 12px;
  color: #222;
  text-align: center;
  white-space: nowrap;
  border-top: 2px solid #666;
  border-bottom: 2px solid #555;
  border-left: ${(p) => (p.$strong ? "2px solid #808080" : "1px solid #777")};
  border-right: 1px solid #777;
  &:first-child { border-left: 2px solid #555; }
`;

const BodyRow = styled.tr<{ $odd: boolean }>`
  height: ${(p) => (p.$odd ? 26 : 27)}px;
`;

const DataCell = styled.td<{ $first: boolean; $shade: boolean; $strong: boolean }>`
  padding: ${(p) => (p.$first ? "0 0 2px" : "0 15px 2px 0")};
  text-align: ${(p) => (p.$first ? "center" : "right")};
  font-size: ${(p) => (p.$first ? 12 : 11)}px;
  background: ${(p) => (p.$shade ? "#f2f2f2" : "#fff")};
  border-bottom: 1px solid #999;
  border-left: ${(p) => (p.$strong ? "2px solid #808080" : p.$first ? "2px solid #555" : "1px solid #aaa")};
  border-right: 1px solid #999;
`;

const TotalRow = styled.tr`
  height: 26px;
`;

const TotalCell = styled.td<{ $first: boolean; $strong: boolean }>`
  padding: ${(p) => (p.$first ? "0 0 3px" : "0 15px 3px 0")};
  text-align: ${(p) => (p.$first ? "center" : "right")};
  font-size: ${(p) => (p.$first ? 12 : 11)}px;
  font-weight: ${(p) => (p.$first ? 400 : 700)};
  color: #222;
  background: ${(p) => (p.$first ? "#fff" : "#f2f2f2")};
  border-top: 2px solid #666;
  border-bottom: 1px solid #888;
  border-left: ${(p) => (p.$strong ? "2px solid #808080" : "1px solid #888")};
  border-right: 1px solid #888;
`;

const SideColumn = styled.div`
  margin-left: 22px;
  padding-top: 14px;
`;

const YearBox = styled.div`
  width: 223px;
  height: 39px;
  display: flex;
  border-top: 2px solid #777;
  border-bottom: 2px solid #555;
`;

const YearLabel = styled.div`
  width: 134px;
  background: #f2f2f2;
  display: flex;
  align-items: center;
  justify-content: center;
  padding-bottom: 3px;
  font-size: 12px;
  font-weight: 500;
  color: #222;
`;

const YearValue = styled.div`
  width: 74px;
  display: flex;
  align-items: center;
  justify-content: flex-end;
  padding: 0 13px 3px 0;
  font-size: 13.5px;
  font-weight: 700;
  color: #111;
`;

const Spinner = styled.div`
  width: 15px;
  margin: -2px 0;
  display: flex;
  flex-direction: column;
  border-right: 1px solid #555;
`;

const SpinButton = styled.div`
  flex: 1;
  display: flex;
  align-items: center;
  justify-content: center;
  background: #f0f0f0;
  border-bottom: 1px solid #555;
  &:first-child { border-top: 1px solid #777; }
`;

const ActionRow = styled.div`
  margin: 16px 0 0 65px;
  display: flex;
  gap: 10px;
`;

const ActionButton = styled.div`
  width: 47px;
  height: 46px;
  border-radius: 6px;
  background: linear-gradient(135deg, #fff 0%, #f4f4f4 50%, #e2e2e2 100%);
  border: 1px solid #e4e4e4;
  box-shadow: 0 1px 1px rgba(0, 0, 0, 0.12);
  display: flex;
  flex-direction: column;
  align-items: center;
  justify-content: flex-end;
  gap: 1px;
  font-size: 10.5px;
  line-height: 14px;
  color: #444;
  white-space: nowrap;
  padding-bottom: 1px;
`;

const VScroll = styled.aside`
  flex: 1;
  background: #e6e6e6;
  display: flex;
  flex-direction: column;
  padding: 10px 2px 0 3px;
`;

const ScrollButton = styled.div`
  height: 12px;
  flex: none;
  background: #fff;
  border: 1px solid #e0e0e0;
  display: flex;
  align-items: center;
  justify-content: center;
`;

const ScrollTrack = styled.div`
  flex: 1;
  background: #dadada;
  padding-top: 1px;
`;

const ScrollThumb = styled.div`
  height: 327px;
  background: #fff;
  border: 1px solid #e0e0e0;
`;

const TabBar = styled.div`
  height: 25px;
  flex: none;
  background: #e6e6e6;
  border-top: 1px solid #a6a6a6;
  display: flex;
  align-items: flex-start;
`;

const TabNav = styled.div`
  width: 89px;
  height: 17px;
  flex: none;
  display: flex;
  align-items: center;
  gap: 21px;
  padding-left: 23px;
  border-right: 1px solid #888;
  margin-top: 3px;
`;

const SheetTab = styled.div<{ $bg: string; $w: number }>`
  width: ${(p) => p.$w}px;
  height: 20px;
  margin: 1px 3px 0 0;
  flex: none;
  background: ${(p) => p.$bg};
  display: flex;
  align-items: center;
  justify-content: center;
  padding-bottom: 2px;
  font-size: 12.5px;
  color: #333;
`;

const ActiveSheetTab = styled.div`
  width: 88px;
  height: 22px;
  margin: -1px 0 0 0;
  flex: none;
  background: #fff;
  border: 1px solid #b0b0b0;
  border-top-color: #fff;
  border-bottom: 2px solid #217346;
  display: flex;
  align-items: center;
  justify-content: center;
  padding-bottom: 2px;
  font-size: 12.5px;
  color: #217346;
`;

const AddSheet = styled.div`
  margin: 5px 0 0 30px;
  display: flex;
`;

const TabGrip = styled.span`
  margin: 2px 0 0 424px;
  font-size: 13px;
  line-height: 20px;
  color: #aaa;
`;

const HScroll = styled.div`
  margin: 6px 0 0 10px;
  width: 50px;
  display: flex;
  height: 13px;
`;

const HButton = styled.div`
  width: 13px;
  flex: none;
  background: #fff;
  border: 1px solid #ccc;
  display: flex;
  align-items: center;
  justify-content: center;
`;

const HThumb = styled.div`
  width: 14px;
  flex: none;
  background: #fff;
`;

const HTrack = styled.div`
  flex: 1;
  background: #d4d4d4;
`;

const StatusBar = styled.footer`
  height: 19px;
  flex: none;
  display: flex;
  align-items: center;
  padding-left: 686px;
`;

const ViewButton = styled.div<{ $selected?: boolean }>`
  width: 36px;
  height: 19px;
  display: flex;
  align-items: center;
  justify-content: center;
  background: ${(p) => (p.$selected ? "#c6c6c6" : "transparent")};
`;

const ZoomSlider = styled.div`
  margin-left: 7px;
  display: flex;
  align-items: center;
  gap: 4px;
`;

const ZoomTrack = styled.div`
  position: relative;
  width: 88px;
  height: 1px;
  background: #b4b4b4;
`;

const ZoomThumb = styled.span`
  position: absolute;
  left: 42px;
  top: -4px;
  width: 4px;
  height: 9px;
  background: #777;
`;

const ZoomValue = styled.span`
  margin-left: 10px;
  font-family: "Open Sans", "Noto Sans", sans-serif;
  font-size: 10.5px;
  color: #666;
`;

const Watermarks = styled.div`
  position: absolute;
  inset: 0;
  overflow: hidden;
  pointer-events: none;
  z-index: 5;
`;

const Mark = styled.span`
  position: absolute;
  font-family: Lato, "Noto Sans", sans-serif;
  font-size: 51px;
  line-height: 51px;
  font-weight: 700;
  letter-spacing: 1px;
  color: rgba(235, 60, 40, 0.035);
  white-space: nowrap;
  transform: translateY(-51px) rotate(-33deg);
  transform-origin: left bottom;
`;
